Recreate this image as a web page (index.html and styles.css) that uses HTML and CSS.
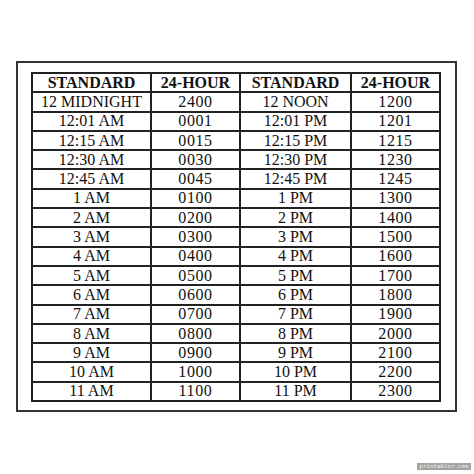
FILE: index.html
```html
<!DOCTYPE html>
<html>
<head>
<meta charset="utf-8">
<link rel="stylesheet" href="styles.css">
</head>
<body>
<div class="frame">
  <table class="chart">
    <colgroup>
      <col class="c1"><col class="c2"><col class="c3"><col class="c4">
    </colgroup>
    <thead>
      <tr><th>STANDARD</th><th>24-HOUR</th><th>STANDARD</th><th>24-HOUR</th></tr>
    </thead>
    <tbody>
      <tr><td>12 MIDNIGHT</td><td class="n">2400</td><td>12 NOON</td><td class="n">1200</td></tr>
      <tr><td>12:01 AM</td><td class="n">0001</td><td>12:01 PM</td><td class="n">1201</td></tr>
      <tr><td>12:15 AM</td><td class="n">0015</td><td>12:15 PM</td><td class="n">1215</td></tr>
      <tr><td>12:30 AM</td><td class="n">0030</td><td>12:30 PM</td><td class="n">1230</td></tr>
      <tr><td>12:45 AM</td><td class="n">0045</td><td>12:45 PM</td><td class="n">1245</td></tr>
      <tr><td>1 AM</td><td class="n">0100</td><td>1 PM</td><td class="n">1300</td></tr>
      <tr><td>2 AM</td><td class="n">0200</td><td>2 PM</td><td class="n">1400</td></tr>
      <tr><td>3 AM</td><td class="n">0300</td><td>3 PM</td><td class="n">1500</td></tr>
      <tr><td>4 AM</td><td class="n">0400</td><td>4 PM</td><td class="n">1600</td></tr>
      <tr><td>5 AM</td><td class="n">0500</td><td>5 PM</td><td class="n">1700</td></tr>
      <tr><td>6 AM</td><td class="n">0600</td><td>6 PM</td><td class="n">1800</td></tr>
      <tr><td>7 AM</td><td class="n">0700</td><td>7 PM</td><td class="n">1900</td></tr>
      <tr><td>8 AM</td><td class="n">0800</td><td>8 PM</td><td class="n">2000</td></tr>
      <tr><td>9 AM</td><td class="n">0900</td><td>9 PM</td><td class="n">2100</td></tr>
      <tr><td>10 AM</td><td class="n">1000</td><td>10 PM</td><td class="n">2200</td></tr>
      <tr><td>11 AM</td><td class="n">1100</td><td>11 PM</td><td class="n">2300</td></tr>
    </tbody>
  </table>
</div>
<div class="watermark">printabler.com</div>
</body>
</html>
```
FILE: styles.css
```css
html, body {
  margin: 0;
  padding: 0;
  background: #ffffff;
}
body {
  position: relative;
  width: 474px;
  height: 474px;
  font-family: "Liberation Serif", "Times New Roman", serif;
  color: #111111;
}
.frame {
  box-sizing: border-box;
  margin: 61px 0 0 16px;
  width: 441px;
  height: 351px;
  border: 2px solid #333333;
  padding: 9px 0 0 13px;
}
.chart {
  border-collapse: collapse;
  table-layout: fixed;
  width: 410px;
}
.c1 { width: 119px; }
.c2 { width: 89px; }
.c3 { width: 111px; }
.c4 { width: 89px; }
.chart th, .chart td {
  border: 2px solid #222222;
  padding: 0;
  height: 17.3px;
  text-align: center;
  vertical-align: middle;
  font-size: 16px;
  line-height: 16px;
  white-space: nowrap;
}
.chart th {
  font-weight: bold;
}
.chart td {
  font-weight: normal;
}
.chart td.n {
  letter-spacing: 0.6px;
}
.watermark {
  position: absolute;
  left: 417px;
  top: 463px;
  width: 54px;
  height: 7px;
  background: #a3a3a3;
  color: #f4f4f4;
  font-family: "DejaVu Sans Mono", monospace;
  font-size: 5.5px;
  line-height: 7px;
  text-align: center;
  letter-spacing: 0.2px;
}
```
